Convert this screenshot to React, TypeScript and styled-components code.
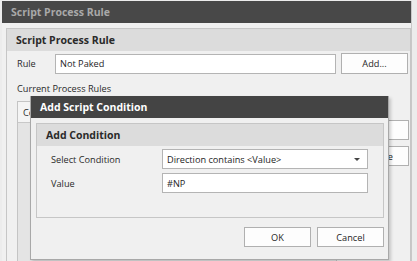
import styled, { createGlobalStyle } from "styled-components";

const GlobalStyle = createGlobalStyle`
  html, body {
    margin: 0;
    padding: 0;
  }
  body {
    background: #e9e9e9;
    font-family: "Open Sans", "Noto Sans", sans-serif;
    font-size: 9.2px;
    color: #1e1e1e;
  }
`;

const Screen = styled.div`
  position: relative;
  width: 417px;
  height: 261px;
  overflow: hidden;
  box-sizing: border-box;
  padding: 1px 0 0 2px;
  background: #ececec;
`;

const Window = styled.div`
  width: 409px;
  height: 270px;
  background: #f0f0f0;
  border-right: 1px solid #c8c8c8;
  display: flex;
  flex-direction: column;
`;

const TitleBar = styled.div<{ $active?: boolean }>`
  height: 22px;
  flex: none;
  display: flex;
  align-items: center;
  padding-left: 9px;
  background: ${(p) => (p.$active ? "#444444" : "#484848")};
  color: ${(p) => (p.$active ? "#ffffff" : "#a9a9a9")};
  font-weight: 700;
  font-size: 10.5px;
`;

const WindowBody = styled.div`
  flex: 1;
  padding: 5px 0 0 4px;
  display: flex;
  flex-direction: column;
`;

const Group = styled.div<{ $height?: number }>`
  border: 1px solid #c6c6c6;
  background: #f0f0f0;
  display: flex;
  flex-direction: column;
  ${(p) => (p.$height ? `height: ${p.$height}px; box-sizing: border-box;` : "flex: 1;")}
`;

const GroupHeader = styled.div`
  height: 22px;
  flex: none;
  display: flex;
  align-items: center;
  padding-left: 9px;
  background: #dcdcdc;
  font-weight: 700;
  font-size: 10.5px;
  color: #2a2a2a;
`;

const GroupContent = styled.div<{ $pad: string }>`
  padding: ${(p) => p.$pad};
  display: flex;
  flex-direction: column;
  flex: 1;
`;

const Row = styled.div<{ $top?: number }>`
  display: flex;
  align-items: center;
  margin-top: ${(p) => p.$top ?? 0}px;
`;

const Label = styled.div<{ $width: number }>`
  width: ${(p) => p.$width}px;
  flex: none;
  color: #2a2a2a;
`;

const Field = styled.div<{ $width: number }>`
  width: ${(p) => p.$width}px;
  height: 20px;
  box-sizing: border-box;
  flex: none;
  border: 1px solid #b4b4b4;
  background: #ffffff;
  display: flex;
  align-items: center;
  padding: 0 4px;
  color: #1e1e1e;
`;

const Arrow = styled.span`
  margin-left: auto;
  margin-right: 3px;
  width: 0;
  height: 0;
  border-left: 3px solid transparent;
  border-right: 3px solid transparent;
  border-top: 3px solid #444;
`;

const Button = styled.div<{ $height?: number; $left?: number }>`
  width: 67px;
  height: ${(p) => p.$height ?? 20}px;
  margin-left: ${(p) => p.$left ?? 0}px;
  box-sizing: border-box;
  flex: none;
  border: 1px solid #b0b0b0;
  background: #fdfdfd;
  display: flex;
  align-items: center;
  justify-content: center;
  color: #1e1e1e;
`;

const Caption = styled.div`
  margin: 8px 0 6px;
  color: #2a2a2a;
`;

const ListArea = styled.div`
  display: flex;
  gap: 5px;
  flex: 1;
`;

const ListBox = styled.div`
  width: 319px;
  border: 1px solid #c4c4c4;
  background: #e4e4e4;
  display: flex;
  flex-direction: column;
`;

const ListHeader = styled.div`
  height: 20px;
  border-bottom: 1px solid #c8c8c8;
  background: #f4f4f4;
  display: flex;
  align-items: center;
  padding-left: 5px;
  color: #2a2a2a;
`;

const SideButtons = styled.div`
  display: flex;
  flex-direction: column;
  gap: 6px;
  padding-top: 19px;
`;

const Dialog = styled.div`
  position: absolute;
  left: 30px;
  top: 96px;
  width: 359px;
  height: 164px;
  box-sizing: border-box;
  border: 1px solid #a8a8a8;
  border-top: none;
  background: #f0f0f0;
  box-shadow: 2px 2px 3px rgba(0, 0, 0, 0.18);
  display: flex;
  flex-direction: column;
`;

const DialogBody = styled.div`
  padding: 5px 4px 0 5px;
  display: flex;
  flex-direction: column;
`;

const Footer = styled.div`
  display: flex;
  justify-content: flex-end;
  gap: 6px;
  margin-top: 9px;
`;

export default function App() {
  return (
    <>
      <GlobalStyle />
      <Screen>
        <Window>
          <TitleBar>Script Process Rule</TitleBar>
          <WindowBody>
            <Group>
              <GroupHeader>Script Process Rule</GroupHeader>
              <GroupContent $pad="2px 1px 0 10px">
                <Row>
                  <Label $width={38}>Rule</Label>
                  <Field $width={281}>Not Paked</Field>
                  <Button $height={21} $left={5}>
                    Add...
                  </Button>
                </Row>
                <Caption>Current Process Rules</Caption>
                <ListArea>
                  <ListBox>
                    <ListHeader>Condition</ListHeader>
                  </ListBox>
                  <SideButtons>
                    <Button>Edit...</Button>
                    <Button>Remove</Button>
                  </SideButtons>
                </ListArea>
              </GroupContent>
            </Group>
          </WindowBody>
        </Window>

        <Dialog>
          <TitleBar $active>Add Script Condition</TitleBar>
          <DialogBody>
            <Group $height={95}>
              <GroupHeader>Add Condition</GroupHeader>
              <GroupContent $pad="3px 0 0 14px">
                <Row>
                  <Label $width={111}>Select Condition</Label>
                  <Field $width={206}>
                    Direction contains &lt;Value&gt;
                    <Arrow />
                  </Field>
                </Row>
                <Row $top={4}>
                  <Label $width={111}>Value</Label>
                  <Field $width={206}>#NP</Field>
                </Row>
              </GroupContent>
            </Group>
            <Footer>
              <Button>OK</Button>
              <Button>Cancel</Button>
            </Footer>
          </DialogBody>
        </Dialog>
      </Screen>
    </>
  );
}
